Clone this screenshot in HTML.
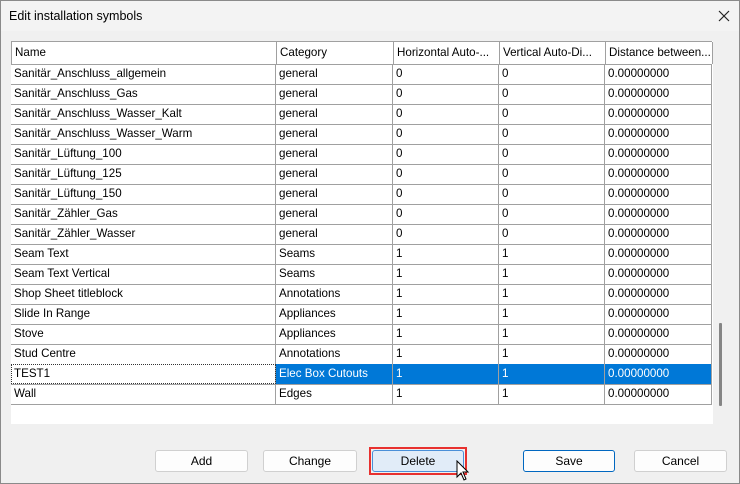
<!DOCTYPE html>
<html><head><meta charset="utf-8"><style>
*{margin:0;padding:0;box-sizing:border-box}
body{width:740px;height:484px;background:#f0f0f0;font-family:"Liberation Sans",sans-serif;font-size:12px;color:#000;position:relative;overflow:hidden}
.win{position:absolute;left:0;top:0;width:740px;height:484px;border:1px solid #8a8a8a;}
.title{position:absolute;left:0;top:0;width:738px;height:30px;background:#f3f3f3}
.title span{position:absolute;left:8px;top:8px;font-size:12.5px}
.x{position:absolute;left:716px;top:8px;width:14px;height:14px}
.tbl{position:absolute;left:10px;top:40px;width:702px;height:383px;background:#fff}
.r{position:absolute;left:0;width:701px;height:21px;border-bottom:1px solid #a0a0a0}
.c{position:absolute;top:0;height:20px;line-height:19px;padding-left:3px;border-right:1px solid #a0a0a0;white-space:nowrap;overflow:hidden;font-size:11.6px}
.sel .c{background:#0078d7;color:#fff}
.sel .c.n{background:#fff;color:#000;outline:1px dotted #333;outline-offset:-1px}
.hd{top:0;height:24px;border-top:1px solid #a0a0a0;border-left:1px solid #a0a0a0;left:0}
.hd .c{height:22px;line-height:21px}
.sb{position:absolute;left:718px;top:322px;width:3px;height:83px;background:#858585;border-radius:1px}
.b{position:absolute;top:449px;height:22px;background:#fdfdfd;border:1px solid #d0d0d0;border-radius:3px;text-align:center;line-height:20px}
</style></head><body><div class="win">
<div class="title"><span>Edit installation symbols</span>
<svg class="x" viewBox="0 0 14 14"><path d="M2 2L12 12M12 2L2 12" stroke="#222" stroke-width="1.2"/></svg></div>
<div class="tbl">
<div class="r hd"><div class="c" style="left:0;width:265px">Name</div><div class="c" style="left:265px;width:117px">Category</div><div class="c" style="left:382px;width:106px">Horizontal Auto-...</div><div class="c" style="left:488px;width:106px">Vertical Auto-Di...</div><div class="c" style="left:594px;width:107px">Distance between...</div></div>
</div>
<div class="sb"></div>
<div class="b" style="left:154px;width:93px">Add</div>
<div class="b" style="left:262px;width:94px">Change</div>
<div style="position:absolute;left:368px;top:446px;width:98px;height:28px;border:2px solid #e8312f"></div>
<div class="b" style="left:371px;top:449px;width:92px;background:#e1ecf8;border-color:#4a8fd8">Delete</div>
<div class="b" style="left:522px;width:92px;border-color:#0067c0">Save</div>
<div class="b" style="left:633px;width:93px">Cancel</div>
<svg style="position:absolute;left:455px;top:459px" width="14" height="22" viewBox="0 0 14 22"><path d="M1 1L1 17L5 13L8 20L10 19L7 12L12 12Z" fill="#fff" stroke="#000" stroke-width="1"/></svg>
</div>
<script>
var d=[["Sanitär_Anschluss_allgemein","general",0,0],["Sanitär_Anschluss_Gas","general",0,0],["Sanitär_Anschluss_Wasser_Kalt","general",0,0],["Sanitär_Anschluss_Wasser_Warm","general",0,0],["Sanitär_Lüftung_100","general",0,0],["Sanitär_Lüftung_125","general",0,0],["Sanitär_Lüftung_150","general",0,0],["Sanitär_Zähler_Gas","general",0,0],["Sanitär_Zähler_Wasser","general",0,0],["Seam Text","Seams",1,1],["Seam Text Vertical","Seams",1,1],["Shop Sheet titleblock","Annotations",1,1],["Slide In Range","Appliances",1,1],["Stove","Appliances",1,1],["Stud Centre","Annotations",1,1],["TEST1","Elec Box Cutouts",1,1],["Wall","Edges",1,1]];
var t=document.querySelector('.tbl'),h='';
d.forEach(function(r,i){h+='<div class="r'+(i==15?' sel':'')+'" style="top:'+(23+20*i)+'px;height:21px"><div class="c n" style="left:0;width:265px">'+r[0]+'</div><div class="c" style="left:265px;width:117px">'+r[1]+'</div><div class="c" style="left:382px;width:106px">'+r[2]+'</div><div class="c" style="left:488px;width:106px">'+r[3]+'</div><div class="c" style="left:594px;width:107px">0.00000000</div></div>';});
t.insertAdjacentHTML('beforeend',h);
</script>
</body></html>
